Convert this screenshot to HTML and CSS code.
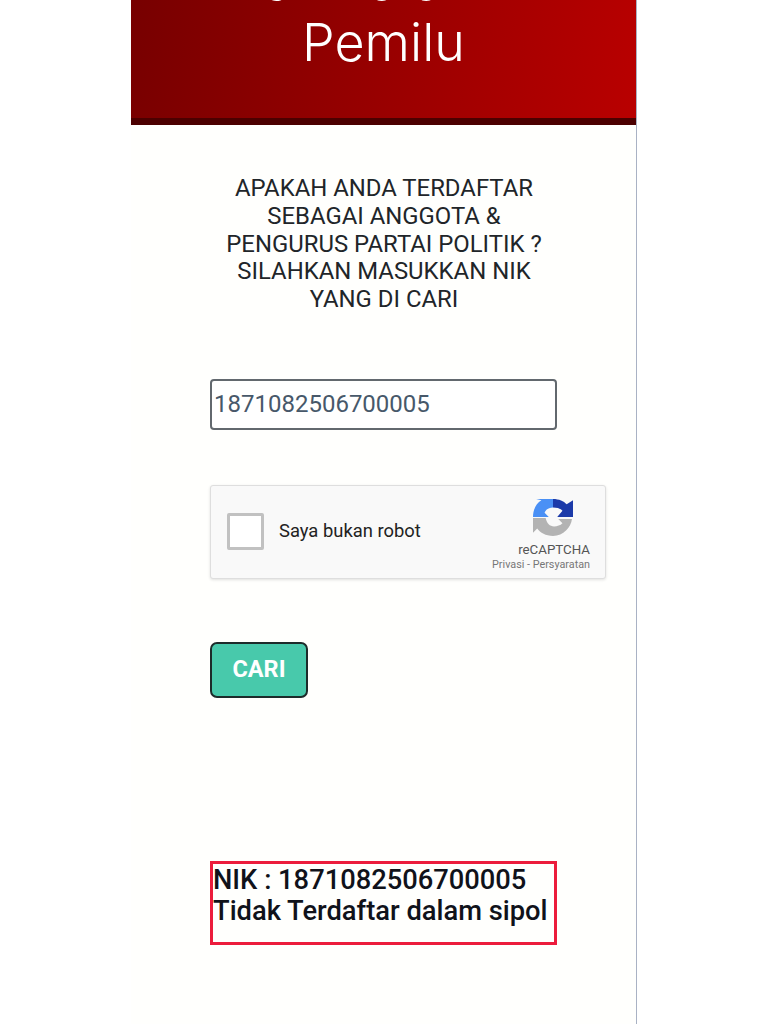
FILE: index.html
```html
<!DOCTYPE html>
<html lang="en">
<head>
    <meta charset="UTF-8">
    <meta name="viewport" content="width=device-width, initial-scale=1.0">
    <title>Cek Data NIK Pemilu</title>
    <link rel="stylesheet" href="styles.css">
</head>
<body>
    <div class="page">
        <div class="header">
            <h1 class="title">Cek Data NIK<br>Pemilu</h1>
        </div>
        <div class="content">
            <h2 class="question">APAKAH ANDA TERDAFTAR SEBAGAI ANGGOTA &amp; PENGURUS PARTAI POLITIK ? SILAHKAN MASUKKAN NIK YANG DI CARI</h2>
            <input type="text" class="nik-input" value="1871082506700005">
            <div class="captcha">
                <span class="captcha-box"></span>
                <span class="captcha-label">Saya bukan robot</span>
                <div class="captcha-brand">
                    <svg class="captcha-logo" viewBox="0 0 38 36" width="40" height="38">
                        <path fill="#b3b3b3" d="M0 19H12C13 24 16 27 20 27C23 27 26 26 28 24L24 20H37C36 28 29 36 19 36C12 36 7 33 4 29L0 33Z"/>
                        <path fill="#4a90f5" d="M3 1H19V9C15 9 12 11 11 14L15 18H0C0 11 3 5 8 2Z"/>
                        <path fill="#1c3aa9" d="M19 1C25 1 29 3 32 6L38 2V18H23L28 12C26 10 23 9 19 9Z"/>
                    </svg>
                    <span class="captcha-name">reCAPTCHA</span>
                    <span class="captcha-links">Privasi - Persyaratan</span>
                </div>
            </div>
            <button class="search-button">CARI</button>
            <div class="result">
                NIK : 1871082506700005<br>
                Tidak Terdaftar dalam sipol
            </div>
        </div>
    </div>
</body>
</html>
```

FILE: styles.css
```css
html, body {
    height: 100%;
}
body {
    margin: 0;
    background-color: #ffffff;
    font-family: 'Roboto', sans-serif;
    overflow: hidden;
}
.page {
    width: 505px;
    height: 1024px;
    margin-left: 131px;
    border-right: 1px solid #a9b2c4;
    background-color: #fffffd;
}
.header {
    height: 117px;
    padding-top: 1px;
    overflow: hidden;
    border-bottom: 7px solid #4c0000;
    background: linear-gradient(100deg, #770000, #b90000);
}
.title {
    margin: -50px 0 0;
    color: #ffffff;
    font-family: 'Inter', 'Roboto', sans-serif;
    font-size: 52px;
    font-weight: 300;
    line-height: 61px;
    text-align: center;
}
.content {
    padding: 50px 79px 0;
}
.question {
    width: 320px;
    margin: 0 0 65px 14px;
    color: #212529;
    font-size: 23.9px;
    font-weight: 400;
    line-height: 27.8px;
    text-align: center;
}
.nik-input {
    display: block;
    width: 347px;
    height: 51px;
    padding: 0 2px;
    box-sizing: border-box;
    border: 2px solid #62686e;
    border-radius: 4px;
    color: #47586a;
    background-color: #ffffff;
    font-family: 'Roboto', sans-serif;
    font-size: 24px;
}
.captcha {
    display: flex;
    align-items: center;
    width: 396px;
    height: 94px;
    margin-top: 55px;
    box-sizing: border-box;
    border: 1px solid #dedede;
    border-radius: 3px;
    background-color: #f9f9f9;
    box-shadow: 0 1px 3px rgba(0, 0, 0, 0.12);
}
.captcha-box {
    width: 31px;
    height: 31px;
    margin-left: 16px;
    border: 3px solid #c1c1c1;
    border-radius: 2px;
    background-color: #ffffff;
}
.captcha-label {
    margin: -2px 0 0 15px;
    color: #222222;
    font-size: 18.4px;
}
.captcha-brand {
    display: flex;
    flex-direction: column;
    align-items: flex-end;
    margin-left: auto;
    padding-right: 15px;
    padding-top: 6px;
}
.captcha-logo {
    margin-right: 17px;
    margin-bottom: 6px;
}
.captcha-name {
    color: #555555;
    font-size: 13.3px;
    line-height: 15px;
}
.captcha-links {
    margin-top: 1px;
    color: #777777;
    font-size: 10.8px;
    line-height: 13px;
}
.search-button {
    display: block;
    width: 98px;
    height: 56px;
    margin-top: 63px;
    padding-bottom: 3px;
    border: 2px solid #1d2b2a;
    border-radius: 7px;
    color: #ffffff;
    background-color: #48c9ab;
    font-family: 'Roboto', sans-serif;
    font-size: 23.5px;
    font-weight: 700;
}
.result {
    width: 347px;
    height: 84px;
    margin-top: 163px;
    padding: 1px 0 0;
    box-sizing: border-box;
    border: 3px solid #ec1c3c;
    color: #10121a;
    font-size: 27.3px;
    font-weight: 500;
    line-height: 31px;
    white-space: nowrap;
}
```
